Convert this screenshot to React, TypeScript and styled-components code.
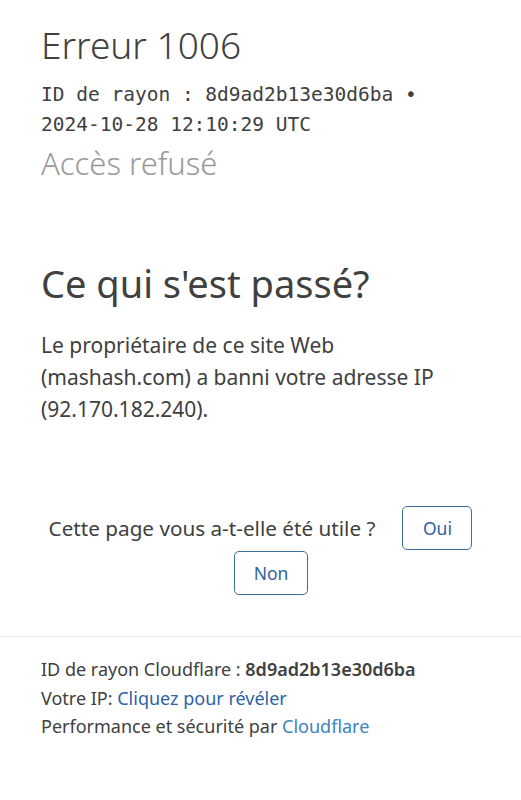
import styled, { createGlobalStyle } from "styled-components";

const Global = createGlobalStyle`
  body {
    margin: 0;
    background: #fff;
    font-family: "Noto Sans", "Open Sans", sans-serif;
    color: #404040;
  }
`;

const SPage = styled.div`
  width: 521px;
  min-height: 800px;
  display: flex;
  flex-direction: column;
`;

const SHeader = styled.header`
  padding: 20px 41px 0;
`;

const STitle = styled.h1`
  margin: 0;
  font-size: 37px;
  font-weight: 300;
  line-height: 50px;
`;

const SRay = styled.p`
  margin: 10px 0 0;
  max-width: 400px;
  font-family: "DejaVu Sans Mono", monospace;
  font-size: 19.5px;
  line-height: 30px;
  color: #404040;
`;

const SSub = styled.h2`
  margin: 3px 0 0;
  font-size: 31px;
  font-weight: 300;
  line-height: 40px;
  color: #999;
`;

const SSection = styled.section`
  padding: 75px 60px 0 41px;
`;

const SHeading = styled.h2`
  margin: 0;
  font-size: 38px;
  font-weight: 400;
  line-height: 50px;
`;

const SText = styled.p`
  margin: 21px 0 0;
  font-size: 21px;
  line-height: 32px;
`;

const SFeedback = styled.div`
  margin-top: 81px;
  padding: 0 20px;
  display: flex;
  flex-wrap: wrap;
  justify-content: center;
  align-items: center;
  row-gap: 1px;
  font-size: 20.7px;
`;

const SQuestion = styled.span`
  margin-right: 6px;
`;

const SButton = styled.button`
  margin-left: 21px;
  font-family: inherit;
  font-size: 17.5px;
  color: #2f62a0;
  background: #fff;
  border: 1.5px solid #3f6e9c;
  border-radius: 5px;
  height: 44px;
  width: ${(p: { $w: number }) => p.$w}px;
`;

const SDivider = styled.hr`
  margin: 41px 0 0;
  border: none;
  border-top: 1px solid #e8e8e8;
`;

const SFooter = styled.footer`
  padding: 18px 41px;
  font-size: 18px;
  line-height: 28.5px;
`;

const SLink = styled.span<{ $light?: boolean }>`
  color: ${(p) => (p.$light ? "#3a84c0" : "#2c62a6")};
`;

const SStrong = styled.strong`
  font-weight: 600;
`;

export default function App() {
  return (
    <SPage>
      <Global />
      <SHeader>
        <STitle>Erreur 1006</STitle>
        <SRay>ID de rayon : 8d9ad2b13e30d6ba • 2024-10-28 12:10:29 UTC</SRay>
        <SSub>Accès refusé</SSub>
      </SHeader>
      <SSection>
        <SHeading>Ce qui s'est passé?</SHeading>
        <SText>
          Le propriétaire de ce site Web (mashash.com) a banni votre adresse IP
          (92.170.182.240).
        </SText>
      </SSection>
      <SFeedback>
        <SQuestion>Cette page vous a-t-elle été utile ?</SQuestion>
        <SButton $w={70}>Oui</SButton>
        <SButton $w={74}>Non</SButton>
      </SFeedback>
      <SDivider />
      <SFooter>
        <div>
          ID de rayon Cloudflare : <SStrong>8d9ad2b13e30d6ba</SStrong>
        </div>
        <div>
          Votre IP: <SLink>Cliquez pour révéler</SLink>
        </div>
        <div>
          Performance et sécurité par <SLink $light>Cloudflare</SLink>
        </div>
      </SFooter>
    </SPage>
  );
}
